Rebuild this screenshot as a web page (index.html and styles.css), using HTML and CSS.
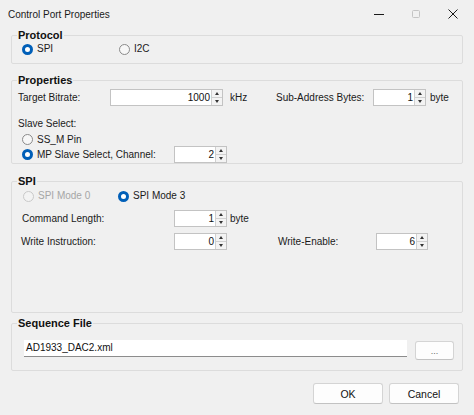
FILE: index.html
```html
<!DOCTYPE html>
<html>
<head>
<meta charset="utf-8">
<title>Control Port Properties</title>
<link rel="stylesheet" href="styles.css">
</head>
<body>
<div class="window">
  <div class="titlebar">
    <span class="title">Control Port Properties</span>
    <div class="controls">
      <svg class="ctl" width="12" height="12" viewBox="0 0 12 12"><path d="M1 6.5h10" stroke="#1a1a1a" stroke-width="1"/></svg>
      <svg class="ctl" width="12" height="12" viewBox="0 0 12 12"><rect x="2.5" y="2.5" width="7" height="7" rx="1" fill="none" stroke="#c4c4c4" stroke-width="1"/></svg>
      <svg class="ctl" width="12" height="12" viewBox="0 0 12 12"><path d="M1.5 1.5l9 9M10.5 1.5l-9 9" stroke="#1a1a1a" stroke-width="1"/></svg>
    </div>
  </div>

  <div class="content">
    <fieldset class="group g-protocol">
      <legend>Protocol</legend>
      <div class="radio-row">
        <span class="radio checked w97"><span class="dot"></span>SPI</span>
        <span class="radio"><span class="dot"></span>I2C</span>
      </div>
    </fieldset>

    <fieldset class="group g-props">
      <legend>Properties</legend>
      <div class="row r-bitrate">
        <span class="label w92">Target Bitrate:</span>
        <span class="spin w113"><span class="val">1000</span><span class="btns"><span class="up"></span><span class="down"></span></span></span>
        <span class="unit w46 ml7">kHz</span>
        <span class="label w97">Sub-Address Bytes:</span>
        <span class="spin w53"><span class="val">1</span><span class="btns"><span class="up"></span><span class="down"></span></span></span>
        <span class="unit ml4">byte</span>
      </div>
      <div class="label r-slave">Slave Select:</div>
      <div class="radio-row r-ssm">
        <span class="radio"><span class="dot"></span>SS_M Pin</span>
      </div>
      <div class="row r-mp">
        <span class="radio checked w152"><span class="dot"></span>MP Slave Select, Channel:</span>
        <span class="spin w53"><span class="val">2</span><span class="btns"><span class="up"></span><span class="down"></span></span></span>
      </div>
    </fieldset>

    <fieldset class="group g-spi">
      <legend>SPI</legend>
      <div class="radio-row r-mode">
        <span class="radio disabled w95"><span class="dot"></span>SPI Mode 0</span>
        <span class="radio checked"><span class="dot"></span>SPI Mode 3</span>
      </div>
      <div class="row r-cmd">
        <span class="label w152">Command Length:</span>
        <span class="spin w53"><span class="val">1</span><span class="btns"><span class="up"></span><span class="down"></span></span></span>
        <span class="unit ml3">byte</span>
      </div>
      <div class="row r-write">
        <span class="label w153">Write Instruction:</span>
        <span class="spin w53"><span class="val">0</span><span class="btns"><span class="up"></span><span class="down"></span></span></span>
        <span class="label w98 ml51">Write-Enable:</span>
        <span class="spin w52"><span class="val">6</span><span class="btns"><span class="up"></span><span class="down"></span></span></span>
      </div>
    </fieldset>

    <fieldset class="group g-seq">
      <legend>Sequence File</legend>
      <div class="row r-file">
        <span class="textfield">AD1933_DAC2.xml</span>
        <span class="btn browse">...</span>
      </div>
    </fieldset>

    <div class="actions">
      <span class="btn action">OK</span>
      <span class="btn action">Cancel</span>
    </div>
  </div>
</div>
</body>
</html>
```

FILE: styles.css
```css
* { box-sizing: border-box; }
html, body { margin: 0; padding: 0; }
body {
  background: #f0f0f0;
  font-family: "Liberation Sans", Arial, sans-serif;
  font-size: 10px;
  color: #1a1a1a;
}
.window {
  width: 474px;
  height: 415px;
  background: #f0f0f0;
  overflow: hidden;
}
.titlebar {
  height: 28px;
  display: flex;
  align-items: center;
  padding-left: 8px;
}
.title {
  font-size: 10px;
  color: #1a1a1a;
}
.controls {
  margin-left: auto;
  display: flex;
  align-items: center;
  gap: 25px;
  padding-right: 15px;
}
.ctl { display: block; }

.content { display: flex; flex-direction: column; }

.group {
  margin: 0 0 0 11px;
  width: 452px;
  padding: 0 6px;
  border: 1px solid #dcdcdc;
  border-radius: 2px;
  min-width: 0;
}
.group legend {
  padding: 0 1px;
  margin-left: -1px;
  font-weight: bold;
  font-size: 11px;
  line-height: 14px;
  color: #111;
}
.g-protocol { padding-bottom: 7px; }
.g-props { margin-top: 9px; padding-bottom: 0; }
.g-spi { margin-top: 10px; padding-bottom: 62px; }
.g-seq { margin-top: 3px; padding-bottom: 10px; }

.row { display: flex; align-items: center; }
.radio-row { display: flex; align-items: center; height: 14px; padding-left: 4px; }

.label, .unit { line-height: 14px; white-space: nowrap; }
.w46 { width: 46px; }
.w92 { width: 92px; }
.w95 { width: 95px; }
.w97 { width: 97px; }
.w98 { width: 98px; }
.w152 { width: 152px; }
.w153 { width: 153px; }
.w113 { width: 113px; }
.w53 { width: 53px; }
.w52 { width: 52px; }
.ml3 { margin-left: 3px; }
.ml4 { margin-left: 4px; }
.ml7 { margin-left: 7px; }
.ml51 { margin-left: 51px; }

.radio {
  display: flex;
  align-items: center;
  line-height: 14px;
  white-space: nowrap;
}
.radio .dot {
  width: 11px;
  height: 11px;
  border-radius: 50%;
  border: 1px solid #8a8a8a;
  background: #f7f7f7;
  margin-right: 4px;
  flex: none;
}
.radio.checked .dot {
  border: 3px solid #005fb8;
  background: #ffffff;
}
.radio.disabled { color: #a6a6a6; }
.radio.disabled .dot { border-color: #c9c9c9; background: #f3f3f3; }

.spin {
  height: 17px;
  display: flex;
  background: #ffffff;
  border: 1px solid #c3c3c3;
}
.spin .val {
  flex: 1;
  text-align: right;
  line-height: 15px;
  padding-right: 1px;
  color: #111;
}
.spin .btns {
  width: 11px;
  display: flex;
  flex-direction: column;
  border-left: 1px solid #d0d0d0;
  background: #f3f3f3;
}
.spin .btns span {
  flex: 1;
  display: flex;
  align-items: center;
  justify-content: center;
}
.spin .btns .up { border-bottom: 1px solid #d0d0d0; }
.spin .btns .up::before {
  content: "";
  border-left: 2.5px solid transparent;
  border-right: 2.5px solid transparent;
  border-bottom: 3px solid #333;
}
.spin .btns .down::before {
  content: "";
  border-left: 2.5px solid transparent;
  border-right: 2.5px solid transparent;
  border-top: 3px solid #333;
}

.r-bitrate { margin-top: 2px; }
.r-slave { margin-top: 11px; }
.r-ssm { margin-top: 2px; height: 13px; }
.r-mp { padding-left: 4px; height: 17px; }

.r-mode { margin-top: 1px; padding-left: 5px; }
.r-cmd { margin-top: 7px; padding-left: 4px; }
.r-write { margin-top: 6px; padding-left: 3px; }

.r-file { margin-top: 10px; align-items: flex-start; padding-left: 6px; }
.textfield {
  width: 383px;
  height: 17px;
  background: #ffffff;
  border-bottom: 1px solid #8c8c8c;
  line-height: 16px;
  padding-left: 2px;
  color: #111;
}
.btn {
  display: flex;
  align-items: center;
  justify-content: center;
  background: #fdfdfd;
  border: 1px solid #d4d4d4;
  border-bottom-color: #c2c2c2;
  border-radius: 3px;
}
.browse {
  margin-left: 8px;
  margin-top: 1px;
  width: 39px;
  height: 19px;
  color: #6b6b6b;
  font-size: 9px;
}
.actions {
  display: flex;
  justify-content: flex-end;
  gap: 6px;
  margin-top: 12px;
  padding-right: 15px;
}
.action {
  width: 70px;
  height: 21px;
  font-size: 10.5px;
  color: #111;
}
```
